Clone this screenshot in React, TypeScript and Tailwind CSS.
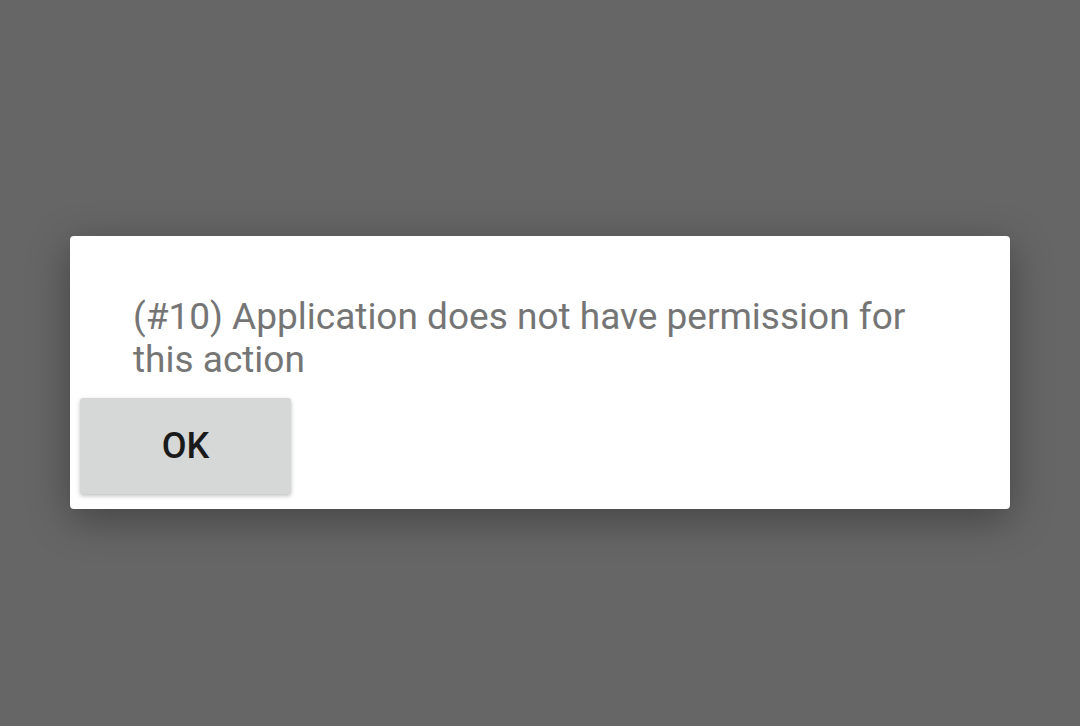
export default function App() {
  return (
    <div className="w-[1080px] h-[726px] bg-[#666666] flex items-start justify-center pt-[236px] font-['Roboto',sans-serif]">
      <div className="w-[940px] h-[273px] bg-white rounded-[4px] shadow-[0_10px_40px_rgba(0,0,0,0.35)] flex flex-col">
        <p className="pl-[63px] pr-[80px] pt-[59px] text-[37px] leading-[43px] text-[#757575]">
          (#10) Application does not have permission for this action
        </p>
        <div className="pl-[10px] pt-[17px]">
          <button className="w-[211px] h-[96px] bg-[#d6d7d7] rounded-[3px] shadow-[0_2px_4px_rgba(0,0,0,0.25)] text-[36px] font-medium text-[#1a1a1a]">
            OK
          </button>
        </div>
      </div>
    </div>
  );
}
